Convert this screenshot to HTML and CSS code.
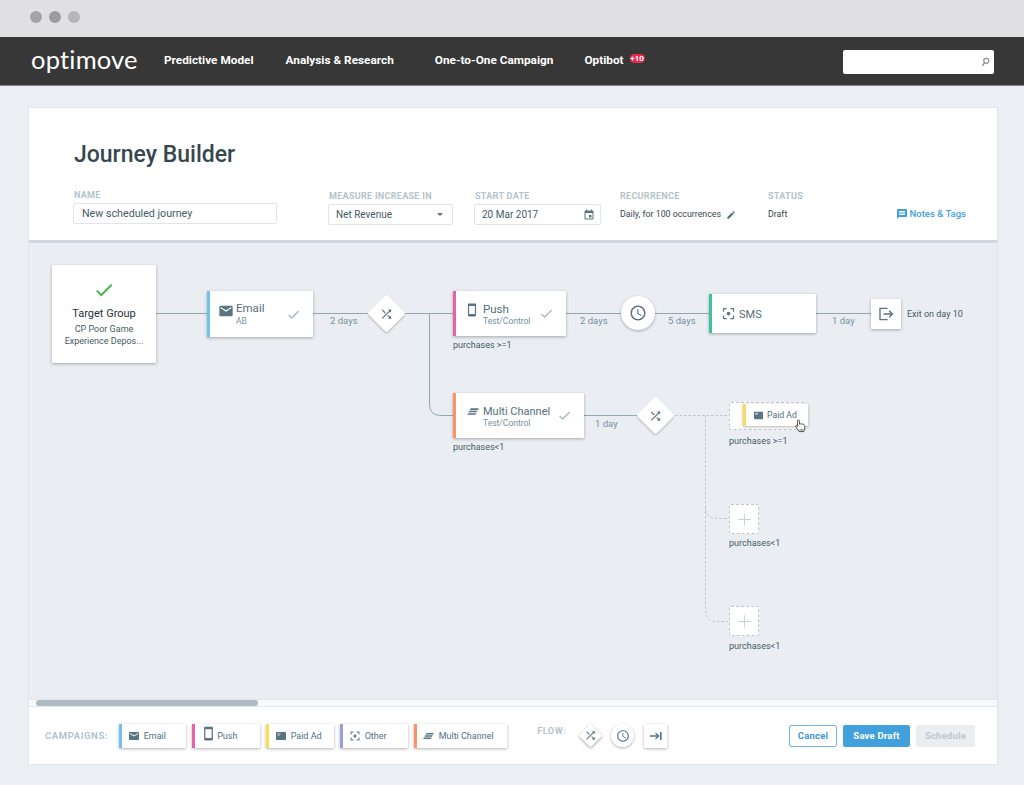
FILE: index.html
```html
<!DOCTYPE html>
<html lang="en">
<head>
<meta charset="utf-8">
<title>Journey Builder</title>
<link rel="stylesheet" href="styles.css">
</head>
<body>
<svg class="defs" width="0" height="0" aria-hidden="true">
  <symbol id="i-mail" viewBox="0 0 24 24"><path d="M20 4H4c-1.1 0-1.99.9-1.99 2L2 18c0 1.1.9 2 2 2h16c1.1 0 2-.9 2-2V6c0-1.1-.9-2-2-2zm0 4l-8 5-8-5V6l8 5 8-5v2z"/></symbol>
  <symbol id="i-phone" viewBox="0 0 24 24"><path d="M17 1.01L7 1c-1.1 0-2 .9-2 2v18c0 1.1.9 2 2 2h10c1.1 0 2-.9 2-2V3c0-1.1-.9-1.99-2-1.99zM17 19H7V5h10v14z"/></symbol>
  <symbol id="i-ad" viewBox="0 0 24 24"><path d="M4 4h16c1.1 0 2 .9 2 2v12c0 1.1-.9 2-2 2H4c-1.1 0-2-.9-2-2V6c0-1.100.9-2 2-2zm1 3v1.500h6V7H5zm0 3v1h4v-1H5z" fill-rule="evenodd"/></symbol>
  <symbol id="i-focus" viewBox="0 0 24 24"><path d="M5 15H3v4c0 1.100.9 2 2 2h4v-2H5v-4zM5 5h4V3H5c-1.100 0-2 .9-2 2v4h2V5zm14-2h-4v2h4v4h2V5c0-1.100-.9-2-2-2zm0 16h-4v2h4c1.100 0 2-.9 2-2v-4h-2v4zM12 9c-1.660 0-3 1.340-3 3s1.340 3 3 3 3-1.340 3-3-1.340-3-3-3z"/></symbol>
  <symbol id="i-multi" viewBox="0 0 24 24"><path d="M7 6h15l-2 3H5zM4.500 10.500h15l-2 3h-15zM2.500 15h15l-2 3H0z"/></symbol>
  <symbol id="i-check" viewBox="0 0 24 24"><path d="M9 16.170L4.830 12l-1.420 1.410L9 19 21 7l-1.410-1.410z"/></symbol>
  <symbol id="i-shuffle" viewBox="0 0 24 24"><path d="M10.590 9.170L5.410 4 4 5.410l5.170 5.170 1.420-1.410zM14.500 4l2.040 2.040L4 18.590 5.410 20 17.960 7.460 20 9.500V4h-5.500zm.33 9.410l-1.410 1.410 3.130 3.130L14.500 20H20v-5.500l-2.040 2.040-3.130-3.130z"/></symbol>
  <symbol id="i-clock" viewBox="0 0 24 24"><path d="M11.990 2C6.470 2 2 6.480 2 12s4.470 10 9.990 10C17.520 22 22 17.520 22 12S17.520 2 11.990 2zM12 20c-4.420 0-8-3.580-8-8s3.580-8 8-8 8 3.580 8 8-3.580 8-8 8zm.5-13H11v6l5.250 3.150.75-1.230-4.500-2.670z"/></symbol>
  <symbol id="i-plus" viewBox="0 0 24 24"><path d="M11.300 2h1.400v9.300H22v1.400h-9.300V22h-1.400v-9.300H2v-1.400h9.300z"/></symbol>
</svg>

<header class="titlebar">
  <span class="dot dot-a"></span><span class="dot dot-b"></span><span class="dot dot-c"></span>
</header>

<nav class="topnav">
  <span class="logo">optimove</span>
  <a class="navlink">Predictive Model</a>
  <a class="navlink">Analysis &amp; Research</a>
  <a class="navlink navlink-wide">One-to-One Campaign</a>
  <a class="navlink navlink-last">Optibot<span class="badge">+10</span></a>
  <div class="search">
    <svg class="search-icon" viewBox="0 0 12 12"><circle cx="7.500" cy="4.500" r="3" fill="none" stroke="#8f8f8f" stroke-width="1.500"/><path d="M5.500 6.800L3 10.500" stroke="#8f8f8f" stroke-width="1.800" fill="none"/></svg>
  </div>
</nav>

<main class="page">
  <section class="card">
    <div class="head">
      <h1 class="title">Journey Builder</h1>
      <div class="fields">
        <div class="field field-name">
          <span class="label">NAME</span>
          <div class="input input-name">New scheduled journey</div>
        </div>
        <div class="field field-measure">
          <span class="label">MEASURE INCREASE IN</span>
          <div class="input input-select">Net Revenue<span class="caret"></span></div>
        </div>
        <div class="field field-date">
          <span class="label">START DATE</span>
          <div class="input input-date">20 Mar 2017
            <svg class="cal" viewBox="0 0 24 24"><path d="M17 12h-5v5h5v-5zM16 1v2H8V1H6v2H5c-1.110 0-1.990.9-1.990 2L3 19c0 1.100.89 2 2 2h14c1.100 0 2-.9 2-2V5c0-1.100-.9-2-2-2h-1V1h-2zm3 18H5V8h14v11z"/></svg>
          </div>
        </div>
        <div class="field field-rec">
          <span class="label">RECURRENCE</span>
          <div class="value">Daily, for 100 occurrences
            <svg class="pencil" viewBox="0 0 24 24"><path d="M3 17.250V21h3.750L17.810 9.940l-3.750-3.750L3 17.250zM20.710 7.040c.39-.39.39-1.020 0-1.410l-2.340-2.340c-.39-.39-1.020-.39-1.410 0l-1.830 1.830 3.750 3.750 1.830-1.830z"/></svg>
          </div>
        </div>
        <div class="field field-status">
          <span class="label">STATUS</span>
          <div class="value">Draft</div>
        </div>
        <a class="notes">
          <svg class="notes-icon" viewBox="0 0 24 24"><path d="M20 2H4c-1.100 0-1.990.9-1.990 2L2 22l4-4h14c1.100 0 2-.9 2-2V4c0-1.100-.9-2-2-2zm-2 12H6v-2h12v2zm0-3H6V9h12v2zm0-3H6V6h12v2z"/></svg>
          Notes &amp; Tags
        </a>
      </div>
    </div>

    <div class="canvas">
      <svg class="wires" viewBox="29 243 969 456">
        <path class="wire" d="M156 313.500H207M313 313.500H368M405 313.500H453M566 313.500H622M655 313.500H709M816 313.500H871M584 415.500H637M429.500 313.500V404Q429.500 415.500 441 415.500H453"/>
        <path class="wire-dash" d="M675 415.500H729M705.500 415.500V507Q705.500 518.500 717 518.500H729M705.500 507V610Q705.500 621.500 717 621.500H729"/>
      </svg>

      <div class="target">
        <svg class="target-check" viewBox="0 0 24 24"><path d="M9 16.170L4.830 12l-1.420 1.410L9 19 21 7l-1.410-1.410z"/></svg>
        <div class="target-title">Target Group</div>
        <div class="target-sub">CP Poor Game<br>Experience Depos...</div>
      </div>

      <div class="node node-email">
        <svg class="ico"><use href="#i-mail"/></svg>
        <div class="node-text"><div class="node-title">Email</div><div class="node-sub">AB</div></div>
        <svg class="tick"><use href="#i-check"/></svg>
      </div>
      <div class="diamond diamond-1"><svg class="diamond-ico"><use href="#i-shuffle"/></svg></div>
      <span class="gap gap-a">2 days</span>

      <div class="node node-push">
        <svg class="ico"><use href="#i-phone"/></svg>
        <div class="node-text"><div class="node-title">Push</div><div class="node-sub">Test/Control</div></div>
        <svg class="tick"><use href="#i-check"/></svg>
      </div>
      <span class="gap gap-b">2 days</span>
      <div class="round"><svg class="round-ico"><use href="#i-clock"/></svg></div>
      <span class="gap gap-c">5 days</span>

      <div class="node node-sms">
        <svg class="ico"><use href="#i-focus"/></svg>
        <div class="node-text"><div class="node-title">SMS</div></div>
      </div>
      <span class="gap gap-d">1 day</span>
      <div class="exit">
        <svg class="exit-ico" viewBox="0 0 20 20"><path d="M12 3H2.500v14H12M7 10h11M14 6l4 4-4 4" fill="none" stroke="#5a7482" stroke-width="1.700"/></svg>
      </div>
      <span class="note note-exit">Exit on day 10</span>
      <span class="note note-p1">purchases &gt;=1</span>

      <div class="node node-multi">
        <svg class="ico"><use href="#i-multi"/></svg>
        <div class="node-text"><div class="node-title">Multi Channel</div><div class="node-sub">Test/Control</div></div>
        <svg class="tick"><use href="#i-check"/></svg>
      </div>
      <span class="gap gap-e">1 day</span>
      <span class="note note-p2">purchases&lt;1</span>
      <div class="diamond diamond-2"><svg class="diamond-ico"><use href="#i-shuffle"/></svg></div>

      <div class="slot slot-ad"></div>
      <div class="node node-ad">
        <svg class="ico-ad"><use href="#i-ad"/></svg>
        <span class="ad-text">Paid Ad</span>
      </div>
      <svg class="hand" viewBox="0 0 12 15"><path d="M3 1.200c.7-.7 1.600-.3 1.700.6L5 5.500c1-.4 4-.5 5 .6.800.9.800 3 .4 4.500l-.9 3H4.500L2 10 .8 7.800c-.3-.8.600-1.300 1.200-.8l1 1.100-.5-5.700c0-.4.200-.9.500-1.200z" fill="#fff" stroke="#2b2b2b" stroke-width=".9"/><path d="M5.500 11v1.500M7 11v1.500M8.500 11v1.500" stroke="#2b2b2b" stroke-width=".8"/></svg>
      <span class="note note-p3">purchases &gt;=1</span>

      <div class="slot slot-1"><svg class="plus"><use href="#i-plus"/></svg></div>
      <span class="note note-p4">purchases&lt;1</span>
      <div class="slot slot-2"><svg class="plus"><use href="#i-plus"/></svg></div>
      <span class="note note-p5">purchases&lt;1</span>
    </div>

    <div class="scrolltrack"><div class="scrollthumb"></div></div>

    <footer class="foot">
      <span class="foot-label">CAMPAIGNS:</span>
      <div class="chips">
        <div class="chip chip-email"><svg class="ico-sm"><use href="#i-mail"/></svg>Email</div>
        <div class="chip chip-push"><svg class="ico-tall"><use href="#i-phone"/></svg>Push</div>
        <div class="chip chip-ad"><svg class="ico-sm"><use href="#i-ad"/></svg>Paid Ad</div>
        <div class="chip chip-other"><svg class="ico-sm"><use href="#i-focus"/></svg>Other</div>
        <div class="chip chip-multi"><svg class="ico-sm"><use href="#i-multi"/></svg>Multi Channel</div>
      </div>
      <span class="foot-label flow-label">FLOW:</span>
      <div class="flow">
        <div class="flow-diamond"><svg class="flow-ico-in"><use href="#i-shuffle"/></svg></div>
        <div class="flow-round"><svg class="flow-ico"><use href="#i-clock"/></svg></div>
        <div class="flow-box">
          <svg class="flow-ico" viewBox="0 0 16 16"><path d="M1 8h10M7.500 4.500L11 8l-3.500 3.500" fill="none" stroke="#5a7482" stroke-width="1.500"/><path d="M13.500 3.500v9" stroke="#5a7482" stroke-width="2"/></svg>
        </div>
      </div>
      <div class="actions">
        <button class="btn btn-cancel">Cancel</button>
        <button class="btn btn-save">Save Draft</button>
        <button class="btn btn-sched">Schedule</button>
      </div>
    </footer>
  </section>
</main>
</body>
</html>
```

FILE: styles.css
```css
* { box-sizing: border-box; }
html, body { margin: 0; padding: 0; }
body {
  width: 1024px;
  height: 785px;
  overflow: hidden;
  background: #ebeff3;
  font-family: Roboto, "Liberation Sans", sans-serif;
  color: #455a64;
}
.defs { position: absolute; }

.titlebar {
  height: 37px;
  background: #e0e0e2;
  display: flex;
  align-items: center;
  gap: 7px;
  padding: 0 0 3px 30px;
}
.dot { width: 12px; height: 12px; border-radius: 50%; }
.dot-a { background: #a3a3a3; }
.dot-b { background: #9c9c9c; }
.dot-c { background: #b6b6b6; }

.topnav {
  height: 49px;
  background: #373737;
  border-bottom: 1px solid #85888b;
  display: flex;
  align-items: center;
  gap: 32px;
  padding: 0 30px 2px 31px;
  color: #fff;
}
.logo {
  font-family: Lato, "Open Sans", sans-serif;
  font-weight: 400;
  font-size: 25.500px;
  letter-spacing: .2px;
  line-height: 30px;
  width: 101px;
  margin-top: -2px;
}
.navlink { font-size: 11.800px; font-weight: 700; display: flex; align-items: flex-start; white-space: nowrap; }
.navlink-wide { margin-left: 9px; }
.navlink-last { margin-left: -1px; }
.badge {
  margin: 1px 0 0 6px;
  width: 15px;
  height: 9px;
  border-radius: 5px;
  background: #e8264f;
  font-size: 8px;
  line-height: 9px;
  text-align: center;
  font-weight: 700;
}
.search {
  margin-left: auto;
  margin-top: 4px;
  width: 151px;
  height: 24px;
  background: #fff;
  border-radius: 2px;
  display: flex;
  align-items: center;
  justify-content: flex-end;
  padding-right: 4px;
}
.search-icon { width: 10px; height: 10px; }

.page { padding: 21px 26px 0 28px; }
.card {
  width: 970px;
  height: 658px;
  background: #fff;
  border: 1px solid #e0e6ea;
  display: flex;
  flex-direction: column;
}

.head {
  height: 135px;
  flex: none;
  border-bottom: 3px solid #cdd7de;
  padding: 33px 31px 0 45px;
}
.title {
  margin: 0;
  font-size: 23px;
  font-weight: 500;
  line-height: 28px;
  color: #37474f;
}
.fields { display: flex; align-items: flex-start; margin: 21px 0 0 -1px; }
.field { display: flex; flex-direction: column; }
.field-name { width: 204px; }
.field-measure { width: 125px; margin-left: 51px; padding-top: 1px; }
.field-date { width: 127px; margin-left: 21px; padding-top: 1px; }
.field-rec { width: 148px; margin-left: 19px; padding-top: 1px; }
.field-status { width: 60px; padding-top: 1px; }
.label {
  font-size: 9px;
  line-height: 10px;
  font-weight: 700;
  letter-spacing: .3px;
  color: #b5c3cc;
  margin-bottom: 3px;
  padding-left: 1px;
  white-space: nowrap;
}
.field-rec .label, .field-status .label { padding-left: 0; }
.input {
  height: 21px;
  border: 1px solid #dfe5ea;
  border-radius: 2px;
  background: #fff;
  font-size: 10px;
  line-height: 19px;
  padding-left: 7px;
  color: #455a64;
  display: flex;
  align-items: center;
  justify-content: space-between;
}
.input-name { font-size: 10.700px; padding-left: 8px; }
.caret {
  width: 0; height: 0;
  border-left: 3px solid transparent;
  border-right: 3px solid transparent;
  border-top: 3px solid #5a7482;
  margin-right: 9px;
}
.cal { width: 12px; height: 12px; fill: #5a7482; margin-right: 5px; }
.value {
  font-size: 8.800px;
  line-height: 21px;
  color: #37474f;
  display: flex;
  align-items: center;
  white-space: nowrap;
}
.pencil { width: 10px; height: 10px; fill: #5a7482; margin-left: 5px; }
.notes {
  margin-left: auto;
  margin-top: 13px;
  font-size: 9.500px;
  font-weight: 500;
  line-height: 21px;
  color: #42a1dc;
  display: flex;
  align-items: center;
  gap: 2px;
  white-space: nowrap;
}
.notes-icon { width: 12px; height: 12px; fill: #42a1dc; }

/* free diagram canvas */
.canvas {
  position: relative;
  height: 456px;
  flex: none;
  background: #eaeef2;
}
.wires { position: absolute; left: 0; top: 0; width: 969px; height: 456px; }
.wire { fill: none; stroke: #93a7b3; stroke-width: 1; }
.wire-dash { fill: none; stroke: #bcc8d0; stroke-width: 1; stroke-dasharray: 2.500 2; }

.target {
  position: absolute;
  left: 23px; top: 22px;
  width: 104px; height: 98px;
  background: #fff;
  box-shadow: 0 1px 3px rgba(0,0,0,.3);
  text-align: center;
  padding-top: 14px;
}
.target-check { width: 22px; height: 22px; fill: #3eb54a; display: block; margin: 0 auto; }
.target-title { font-size: 11px; font-weight: 400; line-height: 13px; margin-top: 6px; color: #263238; }
.target-sub { font-size: 9px; line-height: 12px; margin-top: 3px; color: #455a64; }

.node {
  position: absolute;
  display: flex;
  align-items: center;
  background: #fff;
  box-shadow: 0 1px 3px rgba(0,0,0,.3);
  padding: 0 12px 0 9px;
  gap: 2px;
  border-left: 3px solid #000;
}
.node-email { left: 178px; top: 48px; width: 106px; height: 46px; border-left-color: #6cc3f0; padding-left: 8px; }
.node-push { left: 424px; top: 48px; width: 113px; height: 45px; border-left-color: #e563ab; gap: 4px; }
.node-sms { left: 680px; top: 51px; width: 107px; height: 39px; border-left-color: #3cc1a4; gap: 3px; }
.node-multi { left: 424px; top: 150px; width: 131px; height: 45px; border-left-color: #fb9460; padding-left: 11px; gap: 3px; }
.node-ad { left: 714px; top: 161px; width: 65px; height: 22px; border-left-color: #fbdc55; padding-left: 7px; gap: 3px; }
.ico { width: 16px; height: 16px; fill: #5a7482; flex: none; }
.node-email .ico { margin-top: -7px; }
.node-push .ico { width: 14px; height: 14px; margin-top: -8px; }
.node-multi .ico { width: 13px; height: 13px; margin-top: -9px; }
.node-sms .ico { width: 15px; height: 15px; }
.node-text { flex: 1; min-width: 0; }
.node-title { font-size: 11.500px; line-height: 12px; color: #546e7a; white-space: nowrap; }
.node-multi .node-title, .node-sms .node-title { font-size: 11px; }
.node-sub { font-size: 8.500px; line-height: 10px; margin-top: 1px; color: #78909c; white-space: nowrap; }
.node-push .node-text { margin-top: 2px; }
.node-sms .node-text { margin-top: 2px; }
.node-multi .node-text { margin-top: 2px; }
.node-multi .node-sub { margin-top: 0; }
.node-email .node-sub { margin-top: 2px; }
.tick { width: 15px; height: 15px; fill: #a9b8c1; flex: none; }
.ico-ad { width: 11px; height: 11px; fill: #5a7482; flex: none; }
.ico-sm { width: 12px; height: 12px; fill: #5a7482; flex: none; }
.ad-text { font-size: 8.700px; color: #546e7a; white-space: nowrap; }

.diamond {
  position: absolute;
  width: 27px; height: 27px;
  background: #fff;
  border-radius: 2px;
  box-shadow: 1px 1px 2px rgba(0,0,0,.25);
  transform: rotate(45deg);
  display: flex;
  align-items: center;
  justify-content: center;
}
.diamond-1 { left: 343.500px; top: 56.500px; }
.diamond-2 { left: 612.500px; top: 158.500px; }
.diamond-ico { width: 14px; height: 14px; fill: #5a7482; transform: rotate(-45deg); }

.round {
  position: absolute;
  left: 592px; top: 53px;
  width: 34px; height: 34px;
  border-radius: 50%;
  background: #fff;
  box-shadow: 0 1px 3px rgba(0,0,0,.3);
  display: flex;
  align-items: center;
  justify-content: center;
}
.round-ico { width: 18px; height: 18px; fill: #5a7482; }

.exit {
  position: absolute;
  left: 842px; top: 56px;
  width: 30px; height: 30px;
  background: #fff;
  box-shadow: 0 1px 3px rgba(0,0,0,.3);
  display: flex;
  align-items: center;
  justify-content: center;
}
.exit-ico { width: 16px; height: 16px; }

.gap, .note {
  position: absolute;
  line-height: 12px;
  white-space: nowrap;
}
.gap { font-size: 9.500px; color: #78909c; }
.note { font-size: 9px; color: #455a64; }
.gap-a { left: 301px; top: 72px; }
.gap-b { left: 551px; top: 72px; }
.gap-c { left: 639px; top: 72px; }
.gap-d { left: 803px; top: 72px; }
.gap-e { left: 566px; top: 175px; }
.note-exit { left: 878px; top: 65px; }
.note-p1 { left: 424px; top: 96px; }
.note-p2 { left: 424px; top: 198px; }
.note-p3 { left: 700px; top: 192px; }
.note-p4 { left: 700px; top: 294px; }
.note-p5 { left: 700px; top: 397px; }

.slot {
  position: absolute;
  background: #fff;
  border: 1px dashed #bcc8d0;
  border-radius: 2px;
  display: flex;
  align-items: center;
  justify-content: center;
}
.slot-ad { left: 700px; top: 159px; width: 77px; height: 28px; }
.slot-1 { left: 700px; top: 261px; width: 30px; height: 30px; }
.slot-2 { left: 700px; top: 363px; width: 30px; height: 30px; }
.plus { width: 15px; height: 15px; fill: #c5d0d7; }
.hand { position: absolute; left: 766px; top: 176px; width: 11px; height: 14px; }

.scrolltrack {
  height: 8px;
  flex: none;
  background: #f7f9fa;
  border-top: 1px solid #e0e6ea;
  border-bottom: 1px solid #e0e7ec;
  padding-left: 7px;
}
.scrollthumb { width: 222px; height: 6px; border-radius: 3px; background: #aebbc3; }

.foot {
  flex: 1;
  display: flex;
  align-items: center;
  padding: 0 22px 0 16px;
}
.foot-label {
  font-size: 9.500px;
  font-weight: 700;
  letter-spacing: .6px;
  color: #b5c3cc;
  white-space: nowrap;
}
.chips { display: flex; gap: 6px; margin-left: 11px; }
.chip {
  width: 68px;
  height: 24px;
  background: #fff;
  box-shadow: 0 1px 3px rgba(0,0,0,.3);
  border-left: 3px solid #000;
  display: flex;
  align-items: center;
  gap: 3.500px;
  padding-left: 6px;
  font-size: 9px;
  color: #546e7a;
  white-space: nowrap;
}
.chip-email { width: 67px; border-left-color: #6cc3f0; }
.chip-push { border-left-color: #e563ab; gap: 1px; }
.chip-ad { border-left-color: #fbdc55; }
.chip-other { border-left-color: #989fd6; }
.chip-multi { width: 93px; border-left-color: #fb9460; }
.ico-tall { width: 15px; height: 15px; fill: #5a7482; flex: none; margin-top: -4px; }

.flow-label { margin-left: 30px; margin-top: -10px; font-size: 9px; }
.flow { display: flex; align-items: center; gap: 9px; margin-left: 13px; }
.flow-diamond {
  width: 17px; height: 17px;
  background: #fff;
  border-radius: 1px;
  box-shadow: 1px 1px 3px rgba(0,0,0,.3), 0 0 1px rgba(0,0,0,.2);
  transform: rotate(45deg);
  display: flex;
  align-items: center;
  justify-content: center;
  margin-left: 3px;
  margin-right: 3px;
}
.flow-ico-in { width: 13px; height: 13px; fill: #5a7482; transform: rotate(-45deg); }
.flow-round {
  width: 23px; height: 23px;
  border-radius: 50%;
  background: #fff;
  box-shadow: 0 1px 3px rgba(0,0,0,.3);
  display: flex;
  align-items: center;
  justify-content: center;
}
.flow-box {
  width: 23px; height: 24px;
  margin-left: 1px;
  background: #fff;
  box-shadow: 0 1px 3px rgba(0,0,0,.3);
  display: flex;
  align-items: center;
  justify-content: center;
}
.flow-ico { width: 14px; height: 14px; fill: #5a7482; }

.actions { margin-left: auto; display: flex; gap: 6px; }
.btn {
  height: 22px;
  border-radius: 2px;
  font-family: inherit;
  font-size: 9.500px;
  font-weight: 700;
  letter-spacing: .2px;
  padding: 0;
  border: 1px solid transparent;
}
.btn-cancel { width: 48px; background: #fff; border-color: #6fb7e4; color: #3d97d3; }
.btn-save { width: 67px; background: #42a1dc; color: #fff; }
.btn-sched { width: 59px; background: #ebeef1; color: #bcc8d0; }
```
